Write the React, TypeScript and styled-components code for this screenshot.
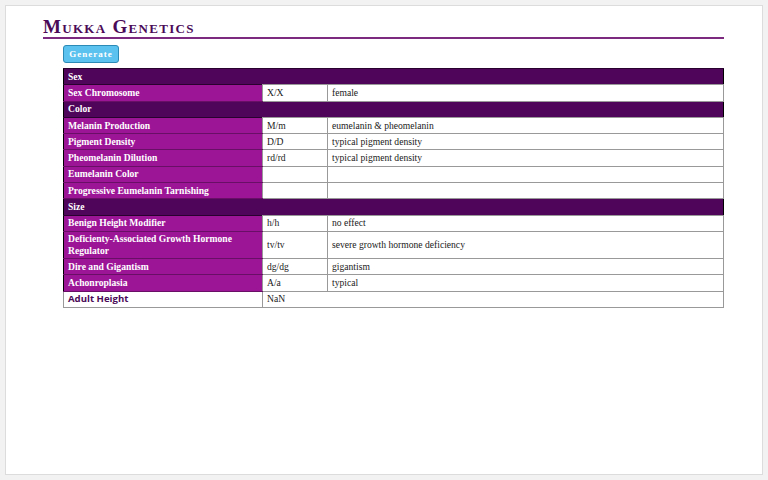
import styled, { createGlobalStyle } from "styled-components";

const GlobalStyle = createGlobalStyle`
  html, body {
    margin: 0;
    padding: 0;
    background: #f2f2f2;
  }
`;

type Row =
  | { kind: "section"; label: string }
  | { kind: "gene"; label: string; genotype: string; phenotype: string };

const rows: Row[] = [
  { kind: "section", label: "Sex" },
  { kind: "gene", label: "Sex Chromosome", genotype: "X/X", phenotype: "female" },
  { kind: "section", label: "Color" },
  { kind: "gene", label: "Melanin Production", genotype: "M/m", phenotype: "eumelanin & pheomelanin" },
  { kind: "gene", label: "Pigment Density", genotype: "D/D", phenotype: "typical pigment density" },
  { kind: "gene", label: "Pheomelanin Dilution", genotype: "rd/rd", phenotype: "typical pigment density" },
  { kind: "gene", label: "Eumelanin Color", genotype: "", phenotype: "" },
  { kind: "gene", label: "Progressive Eumelanin Tarnishing", genotype: "", phenotype: "" },
  { kind: "section", label: "Size" },
  { kind: "gene", label: "Benign Height Modifier", genotype: "h/h", phenotype: "no effect" },
  { kind: "gene", label: "Deficienty-Associated Growth Hormone Regulator", genotype: "tv/tv", phenotype: "severe growth hormone deficiency" },
  { kind: "gene", label: "Dire and Gigantism", genotype: "dg/dg", phenotype: "gigantism" },
  { kind: "gene", label: "Achonroplasia", genotype: "A/a", phenotype: "typical" },
];

export default function App() {
  return (
    <>
      <GlobalStyle />
      <Page>
        <Title>Mukka Genetics</Title>
        <Content>
          <GenerateButton>Generate</GenerateButton>
          <GeneTable>
            <colgroup>
              <col style={{ width: 199 }} />
              <col style={{ width: 65 }} />
              <col />
            </colgroup>
            <tbody>
              {rows.map((row) =>
                row.kind === "section" ? (
                  <SectionRow key={row.label}>
                    <td colSpan={3}>{row.label}</td>
                  </SectionRow>
                ) : (
                  <tr key={row.label}>
                    <LabelCell>{row.label}</LabelCell>
                    <ValueCell>{row.genotype}</ValueCell>
                    <ValueCell>{row.phenotype}</ValueCell>
                  </tr>
                )
              )}
              <tr>
                <TotalLabel>Adult Height</TotalLabel>
                <ValueCell colSpan={2}>NaN</ValueCell>
              </tr>
            </tbody>
          </GeneTable>
        </Content>
      </Page>
    </>
  );
}

const Page = styled.div`
  margin: 5px;
  height: 470px;
  background: #fff;
  border: 1px solid #dcdcdc;
  padding: 11px 38px 0 37px;
  box-sizing: border-box;
`;

const Title = styled.h1`
  margin: 0;
  font-family: "Liberation Serif", serif;
  font-variant: small-caps;
  font-size: 19px;
  font-weight: bold;
  letter-spacing: 1.3px;
  line-height: 20px;
  color: #4b0a57;
  border-bottom: 2px solid #7b2a80;
`;

const Content = styled.div`
  padding: 6px 0 0 20px;
`;

const GenerateButton = styled.button`
  display: block;
  height: 18px;
  width: 56px;
  padding: 0;
  background: #5bc1ee;
  border: 1px solid #2b8ab6;
  border-radius: 3px;
  color: #fff;
  font-family: "Liberation Serif", serif;
  font-size: 9px;
  font-weight: bold;
  letter-spacing: 1px;
`;

const GeneTable = styled.table`
  margin-top: 5px;
  width: 100%;
  border-collapse: collapse;
  border: 1px solid #000;
  table-layout: fixed;
  font-family: "Liberation Serif", serif;
  font-size: 9.6px;

  td {
    height: 16.3px;
    padding: 1px 4px;
    line-height: 12px;
    box-sizing: border-box;
  }
`;

const SectionRow = styled.tr`
  background: #4f0559;
  color: #fff;
  font-weight: bold;
  border-top: 1px solid #2a0230;
  border-bottom: 1px solid #2a0230;
`;

const LabelCell = styled.td`
  background: #9c1597;
  color: #fff;
  font-weight: bold;
  border-bottom: 1px solid #6a0f66;
`;

const ValueCell = styled.td`
  background: #fff;
  color: #1a1a1a;
  border: 1px solid #999;
`;

const TotalLabel = styled.td`
  background: #fff;
  color: #4b0a57;
  font-family: "Open Sans", sans-serif;
  font-weight: bold;
  font-size: 9.6px;
  border: 1px solid #999;
`;
